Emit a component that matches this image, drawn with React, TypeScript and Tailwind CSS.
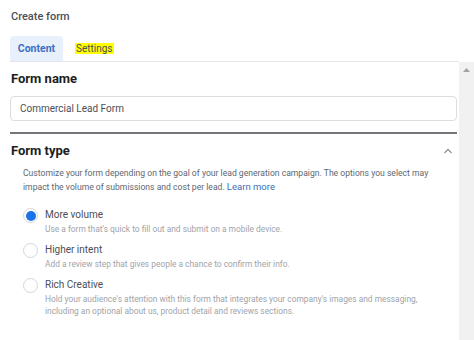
import React from "react";

type Option = { label: string; desc: string[]; checked?: boolean };

const OPTIONS: Option[] = [
  {
    label: "More volume",
    desc: ["Use a form that's quick to fill out and submit on a mobile device."],
    checked: true,
  },
  {
    label: "Higher intent",
    desc: ["Add a review step that gives people a chance to confirm their info."],
  },
  {
    label: "Rich Creative",
    desc: [
      "Hold your audience's attention with this form that integrates your company's images and messaging,",
      "including an optional about us, product detail and reviews sections.",
    ],
  },
];

function Radio({ checked }: { checked?: boolean }) {
  return (
    <span className="mt-[1px] flex h-[15px] w-[15px] shrink-0 items-center justify-center rounded-full border border-[#d4d6da] bg-white">
      {checked && <span className="h-[10px] w-[10px] rounded-full bg-[#1a73e8]" />}
    </span>
  );
}

export default function App() {
  return (
    <div className="flex h-[340px] w-[474px] flex-col overflow-hidden bg-white font-['Roboto',sans-serif] text-[#1c1e21]">
      {/* header */}
      <div className="mr-[15px] ml-[10px] border-b border-[#e4e6e9]">
        <div className="pt-[9px] pl-[1px] text-[11px] leading-[16px] font-medium text-[#4b4f56]">
          Create form
        </div>
        <div className="mt-[11px] flex items-center gap-[12px]">
          <div className="flex h-[25px] w-[53px] items-center justify-center rounded-t-[4px] bg-[#e7f0fb] text-[10.5px] font-bold text-[#3b6fc4]">
            Content
          </div>
          <span className="bg-[#ffff00] px-[1px] text-[10px] leading-[11px] text-[#4b4f56]">Settings</span>
        </div>
      </div>

      <div className="flex flex-1">
        <div className="flex-1 pr-[2px] pl-[10px]">
          <div className="pt-[8px] pl-[1px] text-[13px] leading-[18px] font-bold">Form name</div>
          <div className="mt-[8px] flex h-[25px] items-center rounded-[4px] border border-[#dadde1] pl-[9px] text-[10px] text-[#4b4f56]">
            Commercial Lead Form
          </div>
          <div className="mt-[11px] h-[2px] bg-[#747679]" />

          <div className="mt-[8px] flex items-center justify-between pl-[1px]">
            <span className="text-[13px] leading-[18px] font-bold">Form type</span>
            <svg width="10" height="6" viewBox="0 0 10 6" className="mr-[4px]">
              <path d="M1.5 5 L5 1.5 L8.5 5" fill="none" stroke="#8d949e" strokeWidth="1.3" />
            </svg>
          </div>

          <p className="mt-[7px] pl-[13px] text-[8.6px] leading-[13px] text-[#606770]">
            Customize your form depending on the goal of your lead generation campaign. The options you select may
            <br />
            impact the volume of submissions and cost per lead.{" "}
            <span className="text-[9.5px] text-[#3a6fb8]">Learn more</span>
          </p>

          <div className="mt-[13px] flex flex-col gap-[7px] pl-[13px]">
            {OPTIONS.map((o) => (
              <div key={o.label} className="flex gap-[7px]">
                <Radio checked={o.checked} />
                <div>
                  <div className="text-[10px] leading-[16px] text-[#4b4f56]">{o.label}</div>
                  {o.desc.map((d) => (
                    <div key={d} className="text-[8.4px] leading-[12px] text-[#a0a4aa]">
                      {d}
                    </div>
                  ))}
                </div>
              </div>
            ))}
          </div>
        </div>

        {/* scrollbar */}
        <div className="flex w-[15px] justify-center bg-[#f1f1f1] pt-[6px]">
          <svg width="7" height="4" viewBox="0 0 7 4">
            <path d="M0 4 L3.5 0 L7 4 Z" fill="#a3a3a3" />
          </svg>
        </div>
      </div>
    </div>
  );
}
